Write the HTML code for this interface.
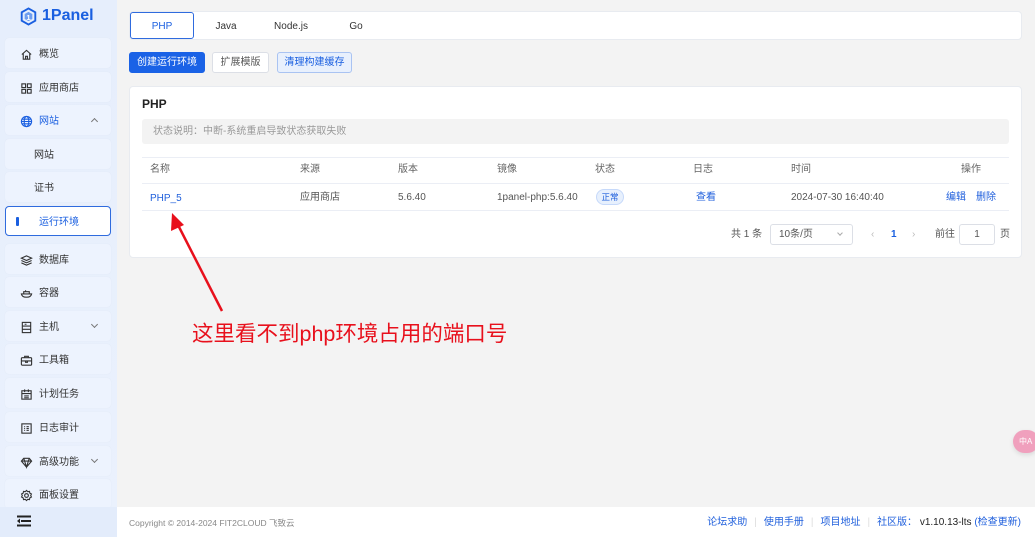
<!DOCTYPE html>
<html><head><meta charset="utf-8">
<style>
*{box-sizing:border-box;margin:0;padding:0}
body{width:1035px;height:537px;overflow:hidden;background:#f3f3f3;font-family:"Liberation Sans","Noto Sans CJK SC",sans-serif;font-size:10px;line-height:12px;color:#303133;position:relative}
.side{position:absolute;left:0;top:0;width:117px;height:537px;background:linear-gradient(180deg,#e6eefc 0%,#eaf1fd 100%)}
.logo{position:absolute;left:20px;top:6px;height:20px;display:flex;align-items:center;color:#1a5fe0;font-weight:bold;font-size:16px;line-height:20px}
.mi{position:absolute;left:5px;width:106px;height:30px;background:#edf3fe;border-radius:4px;display:flex;align-items:center;padding-left:15px;padding-top:4px;font-size:10px;color:#333;box-shadow:0 0 1px rgba(0,0,0,.06)}
.mi svg{width:13px;height:13px;margin-right:6px;flex:none;position:relative;top:-1px}
.mi .ch{position:absolute;right:14px;top:11px;width:5px;height:5px;border-right:1px solid #777;border-bottom:1px solid #777;transform:rotate(45deg)}
.mi .up{transform:rotate(-135deg);top:14px}
.sub{padding-left:29px}
.sel{background:#fff;border:1.5px solid #2f6bde;color:#1a5fe0;padding-left:10px}
.sel i{display:inline-block;width:3px;height:9px;background:#1a5fe0;border-radius:1px;margin-right:20px;position:relative;top:-2px}
.card{position:absolute;background:#fff;border-radius:4px;border:1px solid #e8ebf0}
.tab{position:absolute;top:12px;height:27px;display:flex;align-items:center;justify-content:center;font-size:10px;color:#333;padding-top:2px}
.btn{position:absolute;top:52px;height:21px;line-height:19px;font-size:10px;border-radius:3px;text-align:center;border:1px solid #dcdfe6;background:#fff;color:#555}
.th{position:absolute;top:164px;color:#666;font-size:10px;line-height:12px;height:12px}
.td{position:absolute;top:192px;color:#555;font-size:10px;line-height:12px;height:12px}
.pg{position:absolute;top:229px;line-height:12px;height:12px;color:#555}
.blue{color:#1f5fdc}
.foot{position:absolute;left:117px;top:507px;width:918px;height:30px;background:#fff}
</style></head><body>
<div class="side">
 <div class="logo"><svg width="17" height="19" viewBox="0 0 20 22"><path d="M10 1.5 18 6v10l-8 4.5L2 16V6z" fill="none" stroke="#1a5fe0" stroke-width="2.2"/><path d="M10 5.5 14.5 8v6L10 16.5 5.5 14V8z" fill="#6e9df0"/><text x="10" y="15" font-size="9" fill="#fff" text-anchor="middle" font-weight="bold" font-family="Liberation Sans">1</text></svg><span style="margin-left:5px">1Panel</span></div>
 <div class="mi" style="top:38px"><svg viewBox="0 0 14 14"><path d="M2 7 7 2.5 12 7M3.5 6v6h7V6M6 12V9h2v3" fill="none" stroke="#333" stroke-width="1.2"/></svg>概览</div>
 <div class="mi" style="top:72px"><svg viewBox="0 0 14 14" fill="none" stroke="#333" stroke-width="1.2"><rect x="2" y="2" width="4" height="4"/><rect x="8" y="2" width="4" height="4"/><rect x="2" y="8" width="4" height="4"/><rect x="8" y="8" width="4" height="4"/></svg>应用商店</div>
 <div class="mi" style="top:105px;color:#1a5fe0"><svg viewBox="0 0 14 14" fill="none" stroke="#1a5fe0" stroke-width="1.2"><circle cx="7" cy="7" r="5.5"/><ellipse cx="7" cy="7" rx="2.5" ry="5.5"/><path d="M1.5 7h11M2.5 4.5h9M2.5 9.5h9"/></svg>网站<span class="ch up"></span></div>
 <div class="mi sub" style="top:139px">网站</div>
 <div class="mi sub" style="top:172px">证书</div>
 <div class="mi sel" style="top:206px"><i></i>运行环境</div>
 <div class="mi" style="top:244px"><svg viewBox="0 0 14 14" fill="none" stroke="#333" stroke-width="1.2"><path d="M7 2 12.5 4.5 7 7 1.5 4.5zM1.5 7 7 9.5 12.5 7M1.5 9.5 7 12 12.5 9.5"/></svg>数据库</div>
 <div class="mi" style="top:277px"><svg viewBox="0 0 14 14" fill="none" stroke="#333" stroke-width="1.2"><path d="M1.5 7.5h11c-.5 2.5-2.5 3.5-5.5 3.5S2 10 1.5 7.5zM4 7.5V5h6v2.5M6 5V3.5"/></svg>容器</div>
 <div class="mi" style="top:311px"><svg viewBox="0 0 14 14" fill="none" stroke="#333" stroke-width="1.2"><rect x="2.5" y="1.5" width="9" height="11"/><path d="M2.5 5.5h9M2.5 9h9M5 3.5h2"/></svg>主机<span class="ch"></span></div>
 <div class="mi" style="top:344px"><svg viewBox="0 0 14 14" fill="none" stroke="#333" stroke-width="1.2"><rect x="1.5" y="4" width="11" height="8" rx="1"/><path d="M5 4V2.5h4V4M1.5 7.5h11M6 7v2h2V7"/></svg>工具箱</div>
 <div class="mi" style="top:378px"><svg viewBox="0 0 14 14" fill="none" stroke="#333" stroke-width="1.2"><rect x="2" y="3" width="10" height="9"/><path d="M2 6h10M5 1.5v3M9 1.5v3M4.5 8.5h5M4.5 10.5h5"/></svg>计划任务</div>
 <div class="mi" style="top:412px"><svg viewBox="0 0 14 14" fill="none" stroke="#333" stroke-width="1.2"><rect x="2" y="2" width="10" height="10"/><path d="M4.5 5h1M7 5h2.5M4.5 7h1M7 7h2.5M4.5 9h1M7 9h2.5"/></svg>日志审计</div>
 <div class="mi" style="top:446px"><svg viewBox="0 0 14 14" fill="none" stroke="#333" stroke-width="1.2"><path d="M1.5 5.5 4 2.5h6l2.5 3L7 12zM1.5 5.5h11M5 5.5 7 12l2-6.5M4 2.5l1 3M10 2.5l-1 3"/></svg>高级功能<span class="ch"></span></div>
 <div class="mi" style="top:479px"><svg viewBox="0 0 14 14" fill="none" stroke="#333" stroke-width="1.2"><circle cx="7" cy="7" r="2"/><path d="M7 1.5l1.3 1.4 1.9-.3.4 1.9 1.7.9-.8 1.6.8 1.6-1.7.9-.4 1.9-1.9-.3L7 12.5l-1.3-1.4-1.9.3-.4-1.9-1.7-.9L2.5 7l-.8-1.6 1.7-.9.4-1.9 1.9.3z"/></svg>面板设置</div>
 <div style="position:absolute;left:0;top:507px;width:117px;height:30px;background:#e3ecfb"></div>
 <svg style="position:absolute;left:17px;top:515px" width="14" height="12" viewBox="0 0 14 12"><path d="M0 1.5h14M4 6h10M0 10.5h14" stroke="#222" stroke-width="2"/><path d="M0 6l3-2.5v5z" fill="#222"/></svg>
</div>

<div class="card" style="left:129px;top:11px;width:893px;height:29px"></div>
<div class="tab" style="left:130px;width:64px;border:1.5px solid #2f6bde;border-radius:3px;color:#1a5fe0">PHP</div>
<div class="tab" style="left:200px;width:52px">Java</div>
<div class="tab" style="left:265px;width:52px">Node.js</div>
<div class="tab" style="left:330px;width:52px">Go</div>

<div class="btn" style="left:129px;width:76px;background:#1a62e6;border-color:#1a62e6;color:#fff">创建运行环境</div>
<div class="btn" style="left:212px;width:57px">扩展模版</div>
<div class="btn" style="left:277px;width:75px;background:#e8f0fd;border-color:#a9c3f2;color:#1a5fe0">清理构建缓存</div>

<div class="card" style="left:129px;top:86px;width:893px;height:172px"></div>
<div style="position:absolute;left:142px;top:97px;font-size:12px;line-height:14px;font-weight:bold;color:#222">PHP</div>
<div style="position:absolute;left:142px;top:119px;width:867px;height:25px;background:#f3f3f3;border-radius:3px;color:#999;line-height:25px;padding-left:11px">状态说明：中断-系统重启导致状态获取失败</div>
<div style="position:absolute;left:142px;top:157px;width:867px;border-top:1px solid #ebeef5"></div>
<div style="position:absolute;left:142px;top:183px;width:867px;border-top:1px solid #ebeef5"></div>
<div style="position:absolute;left:142px;top:210px;width:867px;border-top:1px solid #ebeef5"></div>
<div class="th" style="left:150px">名称</div><div class="th" style="left:300px">来源</div><div class="th" style="left:398px">版本</div><div class="th" style="left:497px">镜像</div><div class="th" style="left:595px">状态</div><div class="th" style="left:693px">日志</div><div class="th" style="left:791px">时间</div><div class="th" style="left:961px">操作</div>
<div class="td blue" style="left:150px;top:193px">PHP_5</div><div class="td" style="left:300px">应用商店</div><div class="td" style="left:398px">5.6.40</div><div class="td" style="left:497px">1panel-php:5.6.40</div>
<div style="position:absolute;left:596px;top:189px;width:28px;height:16px;border-radius:8px;background:#e7f0fd;border:1px solid #c6d9fa;color:#1f5fdc;font-size:8.5px;text-align:center;line-height:14px">正常</div>
<div class="td blue" style="left:696px">查看</div><div class="td" style="left:791px">2024-07-30 16:40:40</div><div class="td blue" style="left:946px">编辑</div><div class="td blue" style="left:976px">删除</div>

<div class="pg" style="left:731px">共 1 条</div>
<div style="position:absolute;left:770px;top:224px;width:83px;height:21px;border:1px solid #dcdfe6;border-radius:3px;color:#555;padding-left:8px;line-height:19px">10条/页<span style="position:absolute;right:10px;top:6px;width:4px;height:4px;border-right:1px solid #aaa;border-bottom:1px solid #aaa;transform:rotate(45deg)"></span></div>
<div class="pg" style="left:871px;color:#bbb">‹</div>
<div class="pg" style="left:891px;color:#1a5fe0;font-weight:bold">1</div>
<div class="pg" style="left:912px;color:#bbb">›</div>
<div class="pg" style="left:935px">前往</div>
<div style="position:absolute;left:959px;top:224px;width:36px;height:21px;border:1px solid #dcdfe6;border-radius:3px;text-align:center;line-height:19px;color:#555">1</div>
<div class="pg" style="left:1000px">页</div>

<svg style="position:absolute;left:0;top:0" width="1035" height="537"><line x1="222" y1="311" x2="177" y2="223" stroke="#e8101c" stroke-width="2.5"/><path d="M172 213 L171 231 L184 225 Z" fill="#e8101c"/></svg>
<div style="position:absolute;left:192px;top:321px;font-size:21.5px;color:#e8101c;line-height:26px;white-space:nowrap">这里看不到php环境占用的端口号</div>

<div style="position:absolute;left:1013px;top:430px;width:26px;height:23px;border-radius:12px;background:#f0a0bd;color:#fff;font-size:8px;line-height:23px;padding-left:6px;box-shadow:0 2px 5px rgba(0,0,0,.1)">中A</div>

<div class="foot">
 <div style="position:absolute;left:12px;top:11px;color:#888;font-size:8.5px;line-height:10px">Copyright © 2014-2024 FIT2CLOUD 飞致云</div>
 <div style="position:absolute;right:14px;top:10px;font-size:10px;line-height:12px;white-space:nowrap"><span class="blue">论坛求助</span><span style="color:#ddd;margin:0 7px">|</span><span class="blue">使用手册</span><span style="color:#ddd;margin:0 7px">|</span><span class="blue">项目地址</span><span style="color:#ddd;margin:0 7px">|</span><span class="blue">社区版：</span><span style="color:#222"> v1.10.13-lts </span><span class="blue">(检查更新)</span></div>
</div>
</body></html>
